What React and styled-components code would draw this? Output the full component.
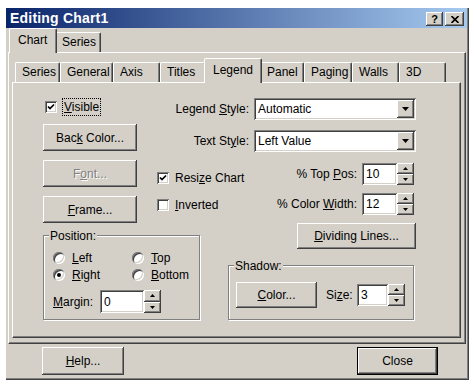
import React from 'react';
import styled, { createGlobalStyle, css } from 'styled-components';

const FACE = '#d4d0c8';
const SHADOW = '#808080';
const DARK = '#404040';

const GlobalStyle = createGlobalStyle`
  html, body { margin: 0; padding: 0; background: #fff; }
  body {
    font-family: "Liberation Sans", Arial, sans-serif;
    font-size: 12px;
    color: #000;
  }
  * { box-sizing: border-box; }
`;

const raised = css`
  background: ${FACE};
  box-shadow: inset -1px -1px ${DARK}, inset 1px 1px #fff, inset -2px -2px ${SHADOW},
    inset 2px 2px ${FACE};
`;

const sunken = css`
  background: #fff;
  box-shadow: inset 1px 1px ${SHADOW}, inset -1px -1px #fff, inset 2px 2px ${DARK},
    inset -2px -2px ${FACE};
`;

const Page = styled.div`
  padding: 8px 0 0 6px;
`;

const Dialog = styled.div`
  width: 463px;
  height: 372px;
  background: ${FACE};
  box-shadow: inset -1px -1px ${DARK}, inset -2px -2px ${SHADOW};
  display: flex;
  flex-direction: column;
`;

const TitleBar = styled.div`
  height: 20px;
  margin-right: 2px;
  background: linear-gradient(to right, #0a246a, #a6caf0);
  display: flex;
  align-items: center;
  padding: 0 3px 0 4px;
  gap: 2px;
`;

const TitleText = styled.span`
  flex: 1;
  color: #fff;
  font-weight: bold;
  font-size: 14px;
  letter-spacing: 0.2px;
`;

const CaptionButton = styled.div`
  ${raised};
  width: ${(p) => p.$w}px;
  height: 14px;
  display: flex;
  align-items: center;
  justify-content: center;
  font-weight: bold;
  font-size: 11px;
  line-height: 1;
  margin-top: 2px;
`;

const Body = styled.div`
  padding-left: 2px;
`;

const TabStrip = styled.div`
  display: flex;
  align-items: flex-end;
  height: ${(p) => p.$h}px;
  padding-left: ${(p) => p.$pl}px;
`;

const Tab = styled.div`
  position: relative;
  width: ${(p) => p.$w}px;
  height: 20px;
  padding-left: 6px;
  line-height: 18px;
  white-space: nowrap;
  background: ${FACE};
  border-top: 1px solid #fff;
  border-left: 1px solid #fff;
  border-right: 1px solid ${DARK};
  box-shadow: inset -1px 0 ${SHADOW};
  border-radius: 2px 2px 0 0;
  ${(p) =>
    p.$active &&
    css`
      z-index: 2;
      width: ${p.$w + 4}px;
      height: 25px;
      margin: 0 -2px -1px;
      padding-left: 8px;
      padding-top: 2px;
    `}
`;

const Panel = styled.div`
  position: relative;
  width: ${(p) => p.$w}px;
  height: ${(p) => p.$h}px;
  background: ${FACE};
  border-top: 1px solid #fff;
  border-left: 1px solid #fff;
  border-right: 1px solid ${DARK};
  border-bottom: 1px solid ${DARK};
  box-shadow: inset -1px -1px ${SHADOW};
`;

const OuterPanel = styled(Panel)`
  padding: 0 3px 4px 3px;
`;

const InnerPanel = styled(Panel)`
  padding: 15px 0 0 30px;
`;

const Acc = styled.span`
  text-decoration: underline;
  text-underline-offset: 1px;
`;

const PushButton = styled.div`
  ${raised};
  width: ${(p) => p.$w}px;
  height: ${(p) => p.$h}px;
  display: flex;
  align-items: center;
  justify-content: center;
  white-space: nowrap;
  ${(p) =>
    p.$disabled &&
    css`
      color: ${SHADOW};
      text-shadow: 1px 1px #fff;
    `}
  ${(p) =>
    p.$default &&
    css`
      border: 1px solid #000;
    `}
`;

const TopSection = styled.div`
  display: flex;
  align-items: flex-start;
`;

const LeftCol = styled.div`
  width: 94px;
  display: flex;
  flex-direction: column;
  gap: 9px;
`;

const CheckRow = styled.div`
  height: ${(p) => p.$h || 14}px;
  display: flex;
  align-items: center;
  gap: 6px;
  padding-left: ${(p) => p.$pl || 0}px;
  white-space: nowrap;
`;

const CheckBox = styled.div`
  ${sunken};
  width: 12px;
  height: 12px;
  flex: none;
  display: flex;
  align-items: center;
  justify-content: center;
`;

const FocusText = styled.span`
  outline: 1px dotted #000;
  outline-offset: 0;
  padding: 1px 1px;
`;

const RightCol = styled.div`
  width: 259px;
  margin-left: 20px;
  display: flex;
  flex-direction: column;
`;

const FieldRow = styled.div`
  height: 22px;
  display: flex;
  align-items: center;
  justify-content: flex-end;
  gap: 5px;
  margin-top: ${(p) => p.$mt || 0}px;
  padding-right: ${(p) => p.$pr || 0}px;
  white-space: nowrap;
`;

const Combo = styled.div`
  ${sunken};
  width: ${(p) => p.$w}px;
  height: 22px;
  display: flex;
  align-items: center;
  padding: 2px 2px 2px 4px;
`;

const ComboText = styled.span`
  flex: 1;
`;

const ArrowButton = styled.div`
  ${raised};
  width: 17px;
  height: 18px;
  display: flex;
  align-items: center;
  justify-content: center;
`;

const LowerBlock = styled.div`
  display: flex;
  margin-top: 11px;
`;

const CheckCol = styled.div`
  display: flex;
  flex-direction: column;
  gap: 13px;
  padding-top: 8px;
`;

const FieldCol = styled.div`
  margin-left: auto;
  display: flex;
  flex-direction: column;
  gap: 8px;
`;

const EditGroup = styled.div`
  display: flex;
`;

const Edit = styled.div`
  ${sunken};
  width: ${(p) => p.$w}px;
  height: ${(p) => p.$h || 22}px;
  padding: 2px 2px 2px 4px;
  display: flex;
  align-items: center;
`;

const Spinner = styled.div`
  width: 17px;
  height: ${(p) => p.$h || 22}px;
  display: flex;
  flex-direction: column;
`;

const SpinButton = styled.div`
  ${raised};
  flex: 1;
  display: flex;
  align-items: center;
  justify-content: center;
`;

const BottomSection = styled.div`
  display: flex;
  align-items: flex-start;
  width: 373px;
`;

const GroupBox = styled.div`
  position: relative;
  width: ${(p) => p.$w}px;
  height: ${(p) => p.$h}px;
  margin-top: ${(p) => p.$mt || 0}px;
  margin-right: ${(p) => p.$mr || 0}px;
  border: 1px solid ${SHADOW};
  box-shadow: inset 1px 1px #fff, 1px 1px #fff;
  padding: ${(p) => p.$pad};
`;

const GroupLabel = styled.span`
  position: absolute;
  top: -7px;
  left: 5px;
  padding: 0 1px;
  line-height: 14px;
  background: ${FACE};
`;

const RadioGrid = styled.div`
  display: grid;
  grid-template-columns: 79px auto;
  grid-auto-rows: 17px;
`;

const RadioItem = styled.div`
  display: flex;
  align-items: center;
  gap: 7px;
`;

const Radio = styled.div`
  width: 12px;
  height: 12px;
  border-radius: 50%;
  background: #fff;
  box-shadow: inset 1px 1px ${SHADOW}, inset -1px -1px #fff, inset 2px 2px ${DARK},
    inset -2px -2px ${FACE};
  display: flex;
  align-items: center;
  justify-content: center;
`;

const RadioDot = styled.div`
  width: 4px;
  height: 4px;
  border-radius: 50%;
  background: #000;
`;

const MarginRow = styled.div`
  display: flex;
  align-items: center;
  margin-top: 7px;
`;

const InlineLabel = styled.span`
  width: ${(p) => p.$w}px;
  margin-left: ${(p) => p.$ml || 0}px;
  white-space: nowrap;
`;

const BottomRight = styled.div`
  margin-left: auto;
  display: flex;
  flex-direction: column;
  align-items: flex-end;
`;

const ShadowRow = styled.div`
  display: flex;
  align-items: center;
`;

const Footer = styled.div`
  display: flex;
  justify-content: space-between;
  padding: 3px 31px 0 36px;
`;

const DownArrow = () => (
  <svg width="7" height="4" viewBox="0 0 7 4">
    <path d="M0 0 H7 L3.5 4 Z" fill="#000" />
  </svg>
);

const TinyArrow = ({ up }) => (
  <svg width="5" height="3" viewBox="0 0 5 3">
    <path d={up ? 'M0 3 H5 L2.5 0 Z' : 'M0 0 H5 L2.5 3 Z'} fill="#000" />
  </svg>
);

const Check = () => (
  <svg width="8" height="8" viewBox="0 0 8 8">
    <path d="M1 3.5 L3 5.6 L7 1.5" stroke="#000" strokeWidth="1.7" fill="none" />
  </svg>
);

const SpinEdit = ({ value, w, h }) => (
  <EditGroup>
    <Edit $w={w} $h={h}>{value}</Edit>
    <Spinner $h={h}>
      <SpinButton>
        <TinyArrow up />
      </SpinButton>
      <SpinButton>
        <TinyArrow />
      </SpinButton>
    </Spinner>
  </EditGroup>
);

const innerTabs = [
  ['Series', 45],
  ['General', 53],
  ['Axis', 47],
  ['Titles', 46],
  ['Legend', 54, true],
  ['Panel', 44],
  ['Paging', 48],
  ['Walls', 47],
  ['3D', 47],
];

export default function App() {
  return (
    <>
      <GlobalStyle />
      <Page>
        <Dialog>
          <TitleBar>
            <TitleText>Editing Chart1</TitleText>
            <CaptionButton $w={17}>?</CaptionButton>
            <CaptionButton $w={19}>
              <svg width="8" height="7" viewBox="0 0 8 7">
                <path d="M0.5 0 L7.5 7 M7.5 0 L0.5 7" stroke="#000" strokeWidth="1.6" />
              </svg>
            </CaptionButton>
          </TitleBar>
          <Body>
            <TabStrip $h={24} $pl={3}>
              <Tab $w={44} $active>
                Chart
              </Tab>
              <Tab $w={46}>Series</Tab>
            </TabStrip>
            <OuterPanel $w={458} $h={292}>
              <TabStrip $h={29} $pl={3}>
                {innerTabs.map(([label, w, active]) => (
                  <Tab key={label} $w={w} $active={active}>
                    {label}
                  </Tab>
                ))}
              </TabStrip>
              <InnerPanel $w={449} $h={256}>
                <TopSection>
                  <LeftCol>
                    <CheckRow $h={17} $pl={2}>
                      <CheckBox>
                        <Check />
                      </CheckBox>
                      <FocusText>
                        <Acc>V</Acc>isible
                      </FocusText>
                    </CheckRow>
                    <PushButton $w={94} $h={27}>
                      <span>
                        Bac<Acc>k</Acc> Color...
                      </span>
                    </PushButton>
                    <PushButton $w={94} $h={27} $disabled>
                      <span>
                        F<Acc>o</Acc>nt...
                      </span>
                    </PushButton>
                    <PushButton $w={94} $h={27}>
                      <span>
                        <Acc>F</Acc>rame...
                      </span>
                    </PushButton>
                  </LeftCol>
                  <RightCol>
                    <FieldRow>
                      <span>
                        Legend <Acc>S</Acc>tyle:
                      </span>
                      <Combo $w={162}>
                        <ComboText>Automatic</ComboText>
                        <ArrowButton>
                          <DownArrow />
                        </ArrowButton>
                      </Combo>
                    </FieldRow>
                    <FieldRow $mt={10}>
                      <span>
                        Text St<Acc>y</Acc>le:
                      </span>
                      <Combo $w={162}>
                        <ComboText>Left Value</ComboText>
                        <ArrowButton>
                          <DownArrow />
                        </ArrowButton>
                      </Combo>
                    </FieldRow>
                    <LowerBlock>
                      <CheckCol>
                        <CheckRow>
                          <CheckBox>
                            <Check />
                          </CheckBox>
                          <span>
                            Resi<Acc>z</Acc>e Chart
                          </span>
                        </CheckRow>
                        <CheckRow>
                          <CheckBox />
                          <span>
                            <Acc>I</Acc>nverted
                          </span>
                        </CheckRow>
                      </CheckCol>
                      <FieldCol>
                        <FieldRow $pr={2}>
                          <span>
                            % Top <Acc>P</Acc>os:
                          </span>
                          <SpinEdit value="10" w={35} />
                        </FieldRow>
                        <FieldRow $pr={2}>
                          <span>
                            % Color <Acc>W</Acc>idth:
                          </span>
                          <SpinEdit value="12" w={35} />
                        </FieldRow>
                      </FieldCol>
                    </LowerBlock>
                  </RightCol>
                </TopSection>
                <BottomSection>
                  <GroupBox $w={157} $h={85} $mt={12} $pad="13px 0 0 9px">
                    <GroupLabel>Position:</GroupLabel>
                    <RadioGrid>
                      <RadioItem>
                        <Radio />
                        <span>
                          <Acc>L</Acc>eft
                        </span>
                      </RadioItem>
                      <RadioItem>
                        <Radio />
                        <span>
                          <Acc>T</Acc>op
                        </span>
                      </RadioItem>
                      <RadioItem>
                        <Radio>
                          <RadioDot />
                        </Radio>
                        <span>
                          <Acc>R</Acc>ight
                        </span>
                      </RadioItem>
                      <RadioItem>
                        <Radio />
                        <span>
                          <Acc>B</Acc>ottom
                        </span>
                      </RadioItem>
                    </RadioGrid>
                    <MarginRow>
                      <InlineLabel $w={47}>
                        <Acc>M</Acc>argin:
                      </InlineLabel>
                      <SpinEdit value="0" w={44} h={23} />
                    </MarginRow>
                  </GroupBox>
                  <BottomRight>
                    <PushButton $w={119} $h={26}>
                      <span>
                        <Acc>D</Acc>ividing Lines...
                      </span>
                    </PushButton>
                    <GroupBox $w={186} $h={55} $mt={16} $mr={2} $pad="16px 0 0 7px">
                      <GroupLabel>Shadow:</GroupLabel>
                      <ShadowRow>
                        <PushButton $w={81} $h={26}>
                          <span>
                            <Acc>C</Acc>olor...
                          </span>
                        </PushButton>
                        <InlineLabel $w={31} $ml={9}>
                          Si<Acc>z</Acc>e:
                        </InlineLabel>
                        <SpinEdit value="3" w={31} />
                      </ShadowRow>
                    </GroupBox>
                  </BottomRight>
                </BottomSection>
              </InnerPanel>
            </OuterPanel>
          </Body>
          <Footer>
            <PushButton $w={82} $h={28}>
              <span>
                <Acc>H</Acc>elp...
              </span>
            </PushButton>
            <PushButton $w={81} $h={28} $default>
              <span>Close</span>
            </PushButton>
          </Footer>
        </Dialog>
      </Page>
    </>
  );
}
